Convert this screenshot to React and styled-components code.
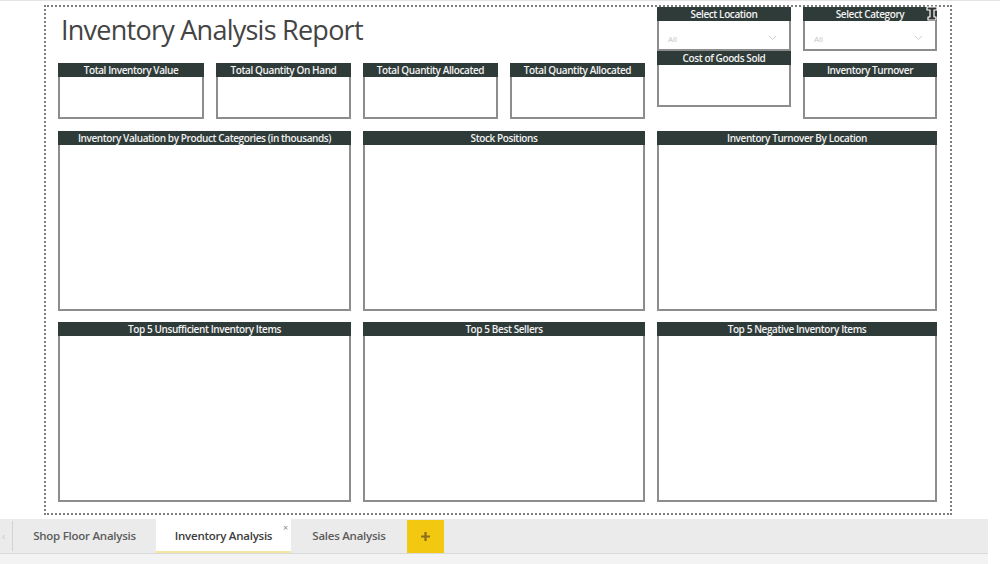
import React from 'react'
import styled, { createGlobalStyle } from 'styled-components'

const GlobalStyle = createGlobalStyle`
  html, body {
    margin: 0;
    padding: 0;
    background: #ffffff;
    font-family: "Open Sans", "Liberation Sans", sans-serif;
  }
`

const Page = styled.div`
  width: 1000px;
  height: 564px;
  overflow: hidden;
  border-top: 1px solid #e4e4e4;
  box-sizing: border-box;
  display: flex;
  flex-direction: column;
`

const Canvas = styled.div`
  margin: 4px 0 0 44px;
  width: 908px;
  height: 510px;
  box-sizing: border-box;
  border: 2px dotted #7e7e7e;
  padding: 0 12px 0 12px;
  display: flex;
  flex-direction: column;
  gap: 12px;
`

const TopGrid = styled.div`
  display: grid;
  grid-template-columns: 146px 135px 135px 135px 134px 134px;
  grid-template-rows: 44px 12px 44px 12px;
  column-gap: 12px;
  position: relative;
`

const ChartGrid = styled.div`
  display: grid;
  grid-template-columns: 293px 282px 280px;
  grid-template-rows: 180px 180px;
  column-gap: 12px;
  row-gap: 11px;
`

const Title = styled.h1`
  grid-column: 1 / 5;
  grid-row: 1 / 3;
  margin: 0;
  padding: 5px 0 0 3px;
  font-family: "Open Sans", sans-serif;
  font-weight: 400;
  font-size: 27px;
  letter-spacing: -0.75px;
  color: #444;
  line-height: 36px;
`

const Card = styled.div`
  grid-column: ${p => p.$col || 'auto'};
  grid-row: ${p => p.$row || 'auto'};
  display: flex;
  flex-direction: column;
  border: 2px solid #8d8d8d;
  border-top: none;
  background: #fff;
  box-sizing: border-box;
`

const Header = styled.div`
  height: 14px;
  margin: 0 -2px;
  background: #2f3b39;
  color: #f2f2f2;
  font-family: "Open Sans", sans-serif;
  font-size: 10px;
  font-weight: 600;
  letter-spacing: -0.4px;
  line-height: 14px;
  text-align: center;
  white-space: nowrap;
  overflow: hidden;
`

const Body = styled.div`
  flex: 1;
`

const SlicerBody = styled.div`
  flex: 1;
  display: flex;
  align-items: center;
  justify-content: space-between;
  padding: 6px 12px 0 9px;
  font-family: "Open Sans", sans-serif;
  font-size: 8px;
  color: #c4c4c4;
`

const FocusIcon = styled.svg`
  position: absolute;
  right: 0;
  top: -1px;
  z-index: 2;
`

const TabBar = styled.div`
  margin-top: 4px;
  width: 988px;
  height: 34px;
  background: #ebebeb;
  display: flex;
  align-items: stretch;
  font-family: "Open Sans", sans-serif;
`

const Scroller = styled.div`
  width: 13px;
  border-right: 1px solid #d2d2d2;
  margin: 2px 0;
  color: #c8c8c8;
  font-size: 10px;
  display: flex;
  align-items: center;
  padding-left: 2px;
  box-sizing: border-box;
`

const Tab = styled.div`
  position: relative;
  width: ${p => p.$w}px;
  display: flex;
  align-items: center;
  justify-content: center;
  font-size: 11.5px;
  letter-spacing: -0.25px;
  font-weight: 600;
  color: ${p => (p.$active ? '#3c3c3c' : '#5c5c5c')};
  background: ${p => (p.$active ? '#ffffff' : 'transparent')};
  border-bottom: 2px solid ${p => (p.$active ? '#f2e6a0' : 'transparent')};
  box-sizing: border-box;
`

const Close = styled.span`
  position: absolute;
  right: 3px;
  top: 2px;
  font-size: 9px;
  color: #888;
  font-weight: 400;
`

const AddTab = styled.div`
  width: 37px;
  background: #f2c811;
  display: flex;
  align-items: center;
  justify-content: center;
  margin-top: 1px;
`

const Footer = styled.div`
  width: 988px;
  flex: 1;
  background: #f3f3f3;
  border-top: 1px solid #d9d9d9;
`

const Chevron = () => (
  <svg width="9" height="6" viewBox="0 0 9 6">
    <path d="M1 1 L4.5 4.5 L8 1" fill="none" stroke="#cfcfcf" strokeWidth="1" />
  </svg>
)

const kpis = [
  { title: 'Total Inventory Value', col: '1' },
  { title: 'Total Quantity On Hand', col: '2' },
  { title: 'Total Quantity Allocated', col: '3' },
  { title: 'Total Quantity Allocated', col: '4' },
]

const charts = [
  'Inventory Valuation by Product Categories (in thousands)',
  'Stock Positions',
  'Inventory Turnover By Location',
  'Top 5 Unsufficient Inventory Items',
  'Top 5 Best Sellers',
  'Top 5 Negative Inventory Items',
]

const App = () => {
  return (
    <Page>
      <GlobalStyle />
      <Canvas>
        <TopGrid>
          <Title>Inventory Analysis Report</Title>
          {kpis.map((k, i) => (
            <Card key={i} $col={k.col} $row="3 / 5">
              <Header>{k.title}</Header>
              <Body />
            </Card>
          ))}
          <Card $col="5" $row="1">
            <Header>Select Location</Header>
            <SlicerBody>
              <span>All</span>
              <Chevron />
            </SlicerBody>
          </Card>
          <Card $col="5" $row="2 / 4">
            <Header>Cost of Goods Sold</Header>
            <Body />
          </Card>
          <Card $col="6" $row="1">
            <Header>Select Category</Header>
            <SlicerBody>
              <span>All</span>
              <Chevron />
            </SlicerBody>
          </Card>
          <Card $col="6" $row="3 / 5">
            <Header>Inventory Turnover</Header>
            <Body />
          </Card>
          <FocusIcon width="12" height="15" viewBox="0 0 12 15">
            <path
              d="M1 1 H11 V4 H8 V11 H10 V14 H2 V11 H4 V4 H1 Z"
              fill="#333"
              stroke="#ffffff"
              strokeWidth="1.2"
              strokeLinejoin="round"
            />
          </FocusIcon>
        </TopGrid>
        <ChartGrid>
          {charts.map((c, i) => (
            <Card key={i}>
              <Header>{c}</Header>
              <Body />
            </Card>
          ))}
        </ChartGrid>
      </Canvas>
      <TabBar>
        <Scroller>‹</Scroller>
        <Tab $w={143}>Shop Floor Analysis</Tab>
        <Tab $w={135} $active>
          Inventory Analysis
          <Close>×</Close>
        </Tab>
        <Tab $w={116}>Sales Analysis</Tab>
        <AddTab>
          <svg width="11" height="11" viewBox="0 0 11 11">
            <path d="M5.5 1 V10 M1 5.5 H10" stroke="#8a6d1a" strokeWidth="2.2" />
          </svg>
        </AddTab>
      </TabBar>
      <Footer />
    </Page>
  )
}

export default App
